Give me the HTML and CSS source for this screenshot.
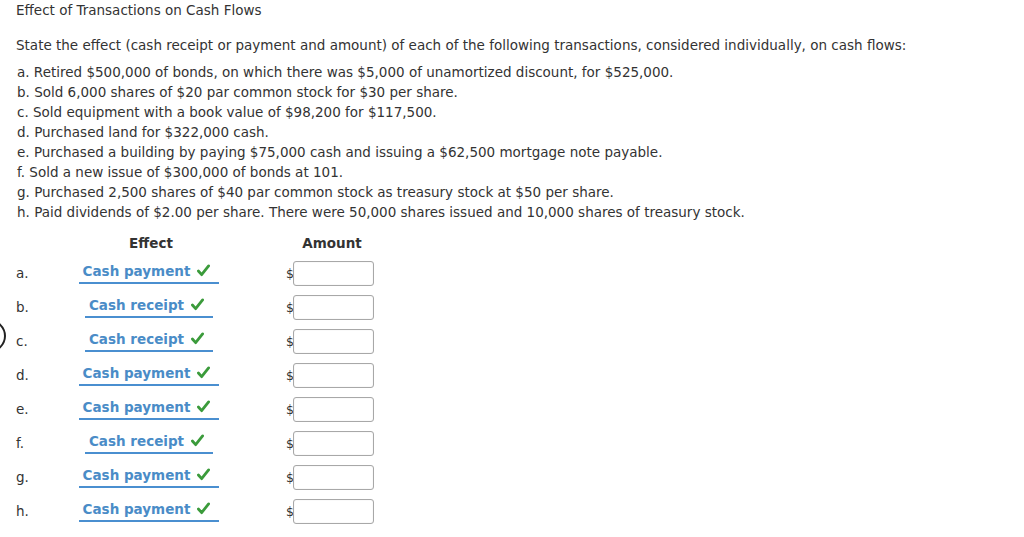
FILE: index.html
```html
<!DOCTYPE html>
<html>
<head>
<meta charset="utf-8">
<link rel="stylesheet" href="styles.css">
</head>
<body>
<div class="ring"></div>
<div class="page">
  <div class="title">Effect of Transactions on Cash Flows</div>
  <p class="intro">State the effect (cash receipt or payment and amount) of each of the following transactions, considered individually, on cash flows:</p>
  <ol class="items">
    <li>a. Retired $500,000 of bonds, on which there was $5,000 of unamortized discount, for $525,000.</li>
    <li>b. Sold 6,000 shares of $20 par common stock for $30 per share.</li>
    <li>c. Sold equipment with a book value of $98,200 for $117,500.</li>
    <li>d. Purchased land for $322,000 cash.</li>
    <li>e. Purchased a building by paying $75,000 cash and issuing a $62,500 mortgage note payable.</li>
    <li>f. Sold a new issue of $300,000 of bonds at 101.</li>
    <li>g. Purchased 2,500 shares of $40 par common stock as treasury stock at $50 per share.</li>
    <li>h. Paid dividends of $2.00 per share. There were 50,000 shares issued and 10,000 shares of treasury stock.</li>
  </ol>
  <div class="table">
    <div class="row head">
      <div class="lbl"></div>
      <div class="eff">Effect</div>
      <div class="amt">Amount</div>
    </div>
    <div class="row"><div class="lbl">a.</div><div class="eff"><span class="sel">Cash payment<svg class="chk" viewBox="0 0 14 14"><path d="M1.5 7.5 L5 11.5 L12.5 2"/></svg></span></div><div class="amt"><span class="dol">$</span><span class="box"></span></div></div>
    <div class="row"><div class="lbl">b.</div><div class="eff"><span class="sel">Cash receipt<svg class="chk" viewBox="0 0 14 14"><path d="M1.5 7.5 L5 11.5 L12.5 2"/></svg></span></div><div class="amt"><span class="dol">$</span><span class="box"></span></div></div>
    <div class="row"><div class="lbl">c.</div><div class="eff"><span class="sel">Cash receipt<svg class="chk" viewBox="0 0 14 14"><path d="M1.5 7.5 L5 11.5 L12.5 2"/></svg></span></div><div class="amt"><span class="dol">$</span><span class="box"></span></div></div>
    <div class="row"><div class="lbl">d.</div><div class="eff"><span class="sel">Cash payment<svg class="chk" viewBox="0 0 14 14"><path d="M1.5 7.5 L5 11.5 L12.5 2"/></svg></span></div><div class="amt"><span class="dol">$</span><span class="box"></span></div></div>
    <div class="row"><div class="lbl">e.</div><div class="eff"><span class="sel">Cash payment<svg class="chk" viewBox="0 0 14 14"><path d="M1.5 7.5 L5 11.5 L12.5 2"/></svg></span></div><div class="amt"><span class="dol">$</span><span class="box"></span></div></div>
    <div class="row"><div class="lbl">f.</div><div class="eff"><span class="sel">Cash receipt<svg class="chk" viewBox="0 0 14 14"><path d="M1.5 7.5 L5 11.5 L12.5 2"/></svg></span></div><div class="amt"><span class="dol">$</span><span class="box"></span></div></div>
    <div class="row"><div class="lbl">g.</div><div class="eff"><span class="sel">Cash payment<svg class="chk" viewBox="0 0 14 14"><path d="M1.5 7.5 L5 11.5 L12.5 2"/></svg></span></div><div class="amt"><span class="dol">$</span><span class="box"></span></div></div>
    <div class="row"><div class="lbl">h.</div><div class="eff"><span class="sel">Cash payment<svg class="chk" viewBox="0 0 14 14"><path d="M1.5 7.5 L5 11.5 L12.5 2"/></svg></span></div><div class="amt"><span class="dol">$</span><span class="box"></span></div></div>
  </div>
</div>
</body>
</html>
```

FILE: styles.css
```css
html, body {
  margin: 0;
  padding: 0;
  background: #fff;
}
body {
  font-family: "DejaVu Sans", Verdana, sans-serif;
  font-size: 13.5px;
  color: #333;
  position: relative;
  width: 1024px;
  height: 537px;
  overflow: hidden;
}
.ring {
  position: absolute;
  left: -30px;
  top: 319px;
  width: 32px;
  height: 30px;
  border: 2.5px solid #222;
  border-radius: 50%;
}
.page {
  padding: 2px 0 0 16px;
}
.title {
  line-height: 16px;
}
.intro {
  margin: 19px 0 0 0;
  line-height: 16px;
}
.items {
  list-style: none;
  margin: 9px 0 0 0;
  padding: 0 0 0 1px;
}
.items li {
  line-height: 20px;
}
.table {
  margin-top: 8px;
}
.row {
  display: flex;
  align-items: center;
  height: 34px;
}
.row.head {
  height: 26px;
  font-weight: bold;
  color: #333;
}
.lbl {
  width: 62px;
}
.eff {
  width: 142px;
  text-align: center;
}
.head .eff {
  padding-left: 2px;
}
.amt {
  width: 96px;
  margin-left: 62px;
  display: flex;
  justify-content: center;
  align-items: center;
}
.head .amt {
  display: block;
  text-align: center;
  padding-left: 0;
}
.sel {
  display: inline-flex;
  align-items: center;
  color: #4a8cc7;
  font-weight: bold;
  padding: 0 9px 3px 4px;
  border-bottom: 2px solid #4a8fd0;
  line-height: 16px;
}
.chk {
  width: 13px;
  height: 13px;
  margin-left: 7px;
  fill: none;
  stroke: #3b9b3b;
  stroke-width: 3;
  stroke-linecap: round;
  stroke-linejoin: round;
}
.dol {
  font-size: 12.5px;
  color: #333;
  margin-right: -1px;
}
.box {
  display: inline-block;
  width: 79px;
  height: 23px;
  border: 1px solid #a8a8a8;
  border-radius: 3px;
  box-shadow: inset 0 0 1px #ccc;
}
```
